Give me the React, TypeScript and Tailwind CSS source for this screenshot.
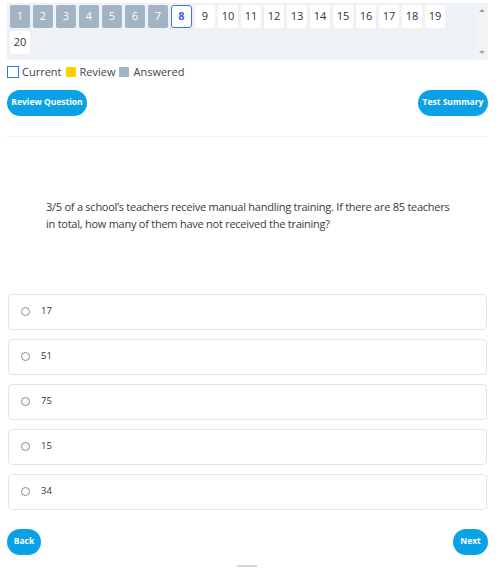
import React from 'react'

const answered = [1, 2, 3, 4, 5, 6, 7]
const current = 8
const options = ['17', '51', '75', '15', '34']

function QuestionNav() {
  const nums = Array.from({ length: 20 }, (_, i) => i + 1)
  return (
    <div className="mt-[3px] flex h-[57px] w-[481px] bg-[#eef1f5]">
      <div className="flex w-[452px] flex-wrap content-start gap-[3px] pl-[3px] pt-[2px]">
        {nums.map((n) => {
          if (answered.includes(n)) {
            return (
              <div key={n} className="flex h-[23px] w-[20px] items-center justify-center rounded-[2px] bg-[#a2b3c4] text-[11px] text-white">
                {n}
              </div>
            )
          }
          if (n === current) {
            return (
              <div key={n} className="flex h-[23px] w-[21px] items-center justify-center rounded-[3px] border border-[#3c72e6] bg-white text-[11px] font-bold text-[#2f66d8]">
                {n}
              </div>
            )
          }
          return (
            <div key={n} className="flex h-[23px] w-[20px] items-center justify-center rounded-[2px] bg-white text-[11px] text-[#333]">
              {n}
            </div>
          )
        })}
      </div>
      <div className="ml-auto flex w-[12px] flex-col items-center justify-between bg-[#f1f3f6] py-[6px]">
        <div className="h-0 w-0 border-x-[3px] border-b-[3px] border-x-transparent border-b-[#a0a0a0]" />
        <div className="h-0 w-0 border-x-[3px] border-t-[3px] border-x-transparent border-t-[#a0a0a0]" />
      </div>
    </div>
  )
}

function Legend() {
  return (
    <div className="mt-[4px] flex items-center text-[11px] text-[#444]">
      <span className="mr-[3px] h-[12px] w-[12px] border border-[#3c72e6] bg-white" />
      <span className="mr-[4px]">Current</span>
      <span className="mr-[4px] h-[10px] w-[10px] bg-[#ffd000]" />
      <span className="mr-[4px]">Review</span>
      <span className="mr-[4px] h-[10px] w-[10px] bg-[#a2b3c4]" />
      <span>Answered</span>
    </div>
  )
}

function PillButton({ label, className = '' }: { label: string; className?: string }) {
  return (
    <button className={`h-[26px] rounded-full bg-[#0ba1e6] text-[8.5px] font-bold text-white ${className}`}>
      {label}
    </button>
  )
}

export default function App() {
  return (
    <div
      className="relative h-[569px] w-[500px] overflow-hidden bg-white pl-[7px]"
      style={{ fontFamily: '"Open Sans", "Noto Sans", sans-serif' }}
    >
      <div className="w-[481px]">
        <QuestionNav />
        <Legend />

        <div className="mt-[9px] flex justify-between">
          <PillButton label="Review Question" className="w-[80px]" />
          <PillButton label="Test Summary" className="w-[70px]" />
        </div>

        <div className="mt-[20px] h-px bg-[#f0f1f3]" />

        {/* question */}
        <p className="mt-[61px] w-[450px] pl-[39px] text-[11px] leading-[17px] tracking-[-0.25px] text-[#3a3a3a]">
          3/5 of a school’s teachers receive manual handling training. If there are 85 teachers in total, how many of them have not received the training?
        </p>

        <div className="mt-[62px] flex flex-col gap-[9px] pl-px pr-px">
          {options.map((o) => (
            <label key={o} className="flex h-[36px] items-center rounded-[4px] border border-[#e3e5ea] bg-white">
              <span className="ml-[12px] h-[9px] w-[9px] rounded-full border border-[#8a8a8a]" />
              <span className="ml-[11px] text-[9.5px] text-[#333]">{o}</span>
            </label>
          ))}
        </div>

        <div className="mt-[19px] flex justify-between">
          <PillButton label="Back" className="w-[34px]" />
          <PillButton label="Next" className="w-[35px]" />
        </div>
      </div>
      <div className="absolute bottom-[2px] left-[237px] h-[2px] w-[20px] bg-[#d6d6d6]" />
    </div>
  )
}
